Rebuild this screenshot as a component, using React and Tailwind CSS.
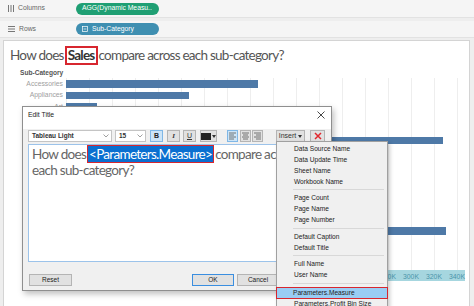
import React from "react";

const rows = [
  ["Accessories", 167], ["Appliances", 107], ["Art", 27], ["Binders", 203],
  ["Bookcases", 115], ["Chairs", 328], ["Copiers", 150], ["Envelopes", 16],
  ["Fasteners", 3], ["Furnishings", 92], ["Labels", 12], ["Machines", 189],
  ["Paper", 78], ["Phones", 330], ["Storage", 224], ["Supplies", 47], ["Tables", 207],
];

const menu = [
  "Data Source Name", "Data Update Time", "Sheet Name", "Workbook Name", "-",
  "Page Count", "Page Name", "Page Number", "-",
  "Default Caption", "Default Title", "-",
  "Full Name", "User Name", "-",
  "Parameters.Measure", "Parameters.Profit Bin Size",
];

const ticks = Array.from({ length: 18 }, (_, i) => i);

const ToolBtn = ({ active, className = "", children }) => (
  <div
    className={`h-[12px] flex items-center justify-center border text-[7px] ${
      active ? "bg-[#cce4f7] border-[#7fb7e6]" : "bg-[#e1e1e1] border-[#b4b4b4]"
    } ${className}`}
  >
    {children}
  </div>
);

const Chevron = () => (
  <svg width="6" height="4" viewBox="0 0 6 4" className="text-[#888]">
    <path d="M0.5 0.5 L3 3 L5.5 0.5" fill="none" stroke="currentColor" strokeWidth="0.8" />
  </svg>
);

const AlignIcon = ({ type }) => {
  const lines = type === "left"
    ? [[1, 8], [1, 6], [1, 8], [1, 6]]
    : type === "center"
    ? [[1, 8], [2, 7], [1, 8], [2, 7]]
    : [[1, 8], [3, 8], [1, 8], [3, 8]];
  return (
    <svg width="9" height="8" viewBox="0 0 9 8">
      {lines.map(([a, b], i) => (
        <line key={i} x1={a} x2={b} y1={1 + i * 2} y2={1 + i * 2} stroke="#555" strokeWidth="0.8" />
      ))}
    </svg>
  );
};

export default function App() {
  return (
    <div className="w-[474px] h-[306px] overflow-hidden relative bg-[#eeeeee] font-['Liberation_Sans',Arial,sans-serif]">
      {/* Shelves */}
      <div className="h-[18px] flex items-center bg-[#f5f5f5] border-b border-[#e2e2e2]">
        <div className="w-[70px] flex items-center pl-[8px] gap-[4px] text-[6.8px] text-[#666]">
          <svg width="6" height="7" viewBox="0 0 6 7">
            <rect x="0" y="0" width="1" height="7" fill="#777" />
            <rect x="2.5" y="0" width="1" height="7" fill="#777" />
            <rect x="5" y="0" width="1" height="7" fill="#777" />
          </svg>
          Columns
        </div>
        <div className="ml-[6px] w-[83px] h-[12px] rounded-full bg-[#1f9f73] text-white text-[6.8px] flex items-center pl-[6px]">
          AGG(Dynamic Measu..
        </div>
      </div>
      <div className="h-[3px]" />
      <div className="h-[17px] flex items-center bg-[#f5f5f5] border-b border-[#e2e2e2]">
        <div className="w-[70px] flex items-center pl-[8px] gap-[4px] text-[6.8px] text-[#666]">
          <svg width="7" height="6" viewBox="0 0 7 6">
            <rect x="0" y="0" width="7" height="1" fill="#777" />
            <rect x="0" y="2.5" width="7" height="1" fill="#777" />
            <rect x="0" y="5" width="7" height="1" fill="#777" />
          </svg>
          Rows
        </div>
        <div className="ml-[6px] w-[83px] h-[12px] rounded-full bg-[#3f8fb1] text-white text-[6.8px] flex items-center pl-[6px] gap-[4px]">
          <svg width="6" height="6" viewBox="0 0 6 6">
            <rect x="0.4" y="0.4" width="5.2" height="5.2" fill="none" stroke="#fff" strokeWidth="0.7" />
            <line x1="1.6" x2="4.4" y1="3" y2="3" stroke="#fff" strokeWidth="0.7" />
          </svg>
          Sub-Category
        </div>
      </div>
      <div className="h-[2px]" />

      {/* View card */}
      <div className="ml-[3px] w-[467px] h-[266px] bg-white border border-b-0 border-[#d4d4d4]">
        <div className="pt-[4px] pl-[6px] h-[24px] flex items-center font-['Lato',sans-serif] text-[13.5px] tracking-[-0.75px] text-[#555]">
          <span>How does</span>
          <span className="ml-[1px] border-2 border-[#d7262f] px-[1px] leading-[15px] font-bold text-[#333]">Sales</span>
          <span className="ml-[1px]">compare across each sub-category?</span>
        </div>
        <div className="h-[13.4px] pl-[16px] pt-[3px] text-[6.6px] font-bold text-[#555]">Sub-Category</div>
        <div className="flex">
          <div className="w-[59px] flex flex-col items-end">
            {rows.map(([name]) => (
              <div key={name} className="h-[11.3px] flex items-center text-[6.8px] text-[#a0a0a0]">
                {name}
              </div>
            ))}
          </div>
          <div className="ml-[3px] w-[399px] relative">
            <svg className="absolute inset-0" width="399" height="192">
              {ticks.map((t) => (
                <line key={t} x1={t * 23 + 0.5} x2={t * 23 + 0.5} y1="0" y2="192" stroke="#eeeeee" strokeWidth="1" />
              ))}
            </svg>
            {rows.map(([name, v]) => (
              <div key={name} className="h-[11.3px] flex items-center relative">
                <div className="h-[7.6px] bg-[#4e79a7]" style={{ width: v * 1.15 }} />
              </div>
            ))}
          </div>
        </div>
        <div className="ml-[62px] w-[399px] h-[11px] bg-[#a6d6df] relative text-[6.8px] text-[#4b95aa]">
          {ticks.map((t) => (
            <span key={t} className="absolute top-[2px] -translate-x-1/2" style={{ left: t * 23 }}>
              {t * 20}K
            </span>
          ))}
        </div>
      </div>

      {/* Edit Title dialog */}
      <div className="absolute left-[22px] top-[106px] w-[310px] h-[185px] bg-[#f0f0f0] border border-[#8f8f8f] shadow-[2px_3px_6px_rgba(0,0,0,0.25)] flex flex-col">
        <div className="h-[16px] bg-white flex items-center justify-between pl-[5px] pr-[6px] text-[6.8px] text-[#222]">
          <span>Edit Title</span>
          <svg width="8" height="8" viewBox="0 0 8 8">
            <path d="M0.5 0.5 L7.5 7.5 M7.5 0.5 L0.5 7.5" stroke="#333" strokeWidth="0.9" />
          </svg>
        </div>
        <div className="h-[6px] bg-white" />
        <div className="flex items-center pl-[5px] h-[14px] bg-[#f0f0f0]">
          <div className="w-[84px] h-[12px] bg-white border border-[#c4c4c4] flex items-center justify-between pl-[3px] pr-[2px] text-[6.5px] font-bold text-[#333]">
            Tableau Light
            <Chevron />
          </div>
          <div className="ml-[3px] w-[31px] h-[12px] bg-white border border-[#c4c4c4] flex items-center justify-between pl-[3px] pr-[2px] text-[6.5px] font-bold text-[#333]">
            15
            <Chevron />
          </div>
          <ToolBtn active className="ml-[4px] w-[13px] font-bold text-[#222]">B</ToolBtn>
          <ToolBtn className="ml-[4px] w-[13px] italic font-bold text-[#333] font-['Liberation_Serif',serif]">I</ToolBtn>
          <ToolBtn className="ml-[3px] w-[13px] underline text-[#333]">U</ToolBtn>
          <ToolBtn className="ml-[4px] w-[17px] gap-[1px]">
            <div className="w-[10px] h-[7px] bg-[#222]" />
            <svg width="4" height="3" viewBox="0 0 4 3"><path d="M0 0 L4 0 L2 3 Z" fill="#333" /></svg>
          </ToolBtn>
          <ToolBtn active className="ml-[10px] w-[11px]"><AlignIcon type="left" /></ToolBtn>
          <ToolBtn className="ml-[2px] w-[11px]"><AlignIcon type="center" /></ToolBtn>
          <ToolBtn className="ml-[1px] w-[11px]"><AlignIcon type="right" /></ToolBtn>
          <ToolBtn className="ml-[13px] w-[29px] gap-[2px] text-[6.3px] text-[#333]">
            Insert
            <svg width="4" height="3" viewBox="0 0 4 3"><path d="M0 0 L4 0 L2 3 Z" fill="#333" /></svg>
          </ToolBtn>
          <ToolBtn className="ml-[5px] w-[15px]">
            <svg width="8" height="8" viewBox="0 0 8 8">
              <path d="M1 1 L7 7 M7 1 L1 7" stroke="#e0282e" strokeWidth="1.5" />
            </svg>
          </ToolBtn>
        </div>
        <div className="mt-[1px] mx-[5px] h-[118px] bg-white border border-[#9cc3ea] pl-[3px] pt-[1px] font-['Lato',sans-serif] text-[13.5px] tracking-[-0.7px] leading-[16px] text-[#666]">
          <div className="flex items-center whitespace-nowrap">
            How does
            <span className="ml-[2px] bg-[#0a6fd0] text-white outline outline-[1.5px] outline-[#d7262f] px-[1px]">&lt;Parameters.Measure&gt;</span>
            <span className="ml-[2px]">compare across</span>
          </div>
          <div>each sub-category?</div>
        </div>
        <div className="flex items-center justify-between mt-[12px] pl-[6px] pr-[7px] text-[6.5px] text-[#222]">
          <div className="w-[43px] h-[12px] bg-[#e1e1e1] border border-[#b4b4b4] flex items-center justify-center">Reset</div>
          <div className="flex gap-[3px]">
            <div className="w-[42px] h-[12px] bg-[#e1e1e1] border border-[#3a8ee0] flex items-center justify-center">OK</div>
            <div className="w-[42px] h-[12px] bg-[#e1e1e1] border border-[#b4b4b4] flex items-center justify-center">Cancel</div>
            <div className="w-[42px] h-[12px] bg-[#e1e1e1] border border-[#b4b4b4] flex items-center justify-center">Apply</div>
          </div>
        </div>
      </div>

      {/* Insert menu */}
      <div className="absolute left-[276px] top-[141px] w-[112px] bg-[#f0f0f0] border border-[#a0a0a0] shadow-[2px_2px_4px_rgba(0,0,0,0.2)] pt-[1px] text-[6.6px] text-[#222]">
        {menu.map((m, i) =>
          m === "-" ? (
            <div key={i} className={`${i === 14 ? "h-[6px]" : "h-[5.5px]"} flex items-center pl-[16px] pr-[3px]`}>
              <div className="h-[1px] w-full bg-[#d8d8d8]" />
            </div>
          ) : m === "Parameters.Measure" ? (
            <div key={i} className="h-[12px] flex items-center pl-[16px] bg-[#99cdf4] border-[1.5px] border-[#d7262f] -mx-[1px]">
              {m}
            </div>
          ) : (
            <div key={i} className="h-[11px] flex items-center pl-[17px]">
              {m}
            </div>
          )
        )}
      </div>
    </div>
  );
}
